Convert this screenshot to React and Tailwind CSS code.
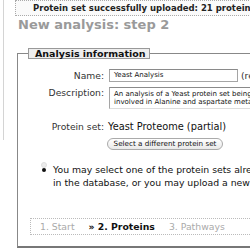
const AnalysisStep2 = () => {
  const steps = [
    { label: '1. Start', active: false },
    { label: '» 2. Proteins', active: true },
    { label: '3. Pathways', active: false },
  ];

  return (
    <div className="w-[250px] h-[250px] overflow-hidden bg-white flex font-['DejaVu_Sans',Verdana,sans-serif] text-[#333]">
      {/* sidebar edge */}
      <div className="w-[4px] h-[140px] border-r border-[#d4d4d4] shrink-0" />

      <div className="ml-[11px] w-[300px] shrink-0 flex flex-col">
        {/* Notice */}
        <div className="h-[16px] border border-dotted border-r-0 border-[#aaa] bg-[#fafafa] pl-[17px] flex items-center text-[8.5px] font-bold text-[#222] whitespace-nowrap">
          Protein set successfully uploaded: 21 proteins
        </div>

        <h1 className="ml-[3px] mt-[1px] text-[13px] leading-[16px] font-bold text-[#9a9a9a] whitespace-nowrap">
          New analysis: step 2
        </h1>

        <fieldset className="mt-[15px] ml-[2px] w-[290px] border border-b-2 border-[#888] border-b-[#777] px-0 pt-[10px] pb-[11px] text-[9.2px]">
          <legend className="ml-[10px] w-[122px] h-[11px] border border-[#999] bg-[#eee] pl-[6px] text-[9.5px] leading-[9px] font-bold text-[#111] whitespace-nowrap">
            Analysis information
          </legend>

          <div className="grid grid-cols-[86px_1fr] gap-x-[5px]">
            <div className="text-right leading-[13px]">Name:</div>
            <div className="flex items-center gap-[3px] whitespace-nowrap">
              <div className="w-[129px] h-[13px] border border-[#a5a5a5] border-t-[#8a8a8a] bg-white pl-[4px] text-[7px] leading-[11px] text-[#111]">
                Yeast Analysis
              </div>
              <span className="leading-[13px]">(required)</span>
            </div>

            <div className="mt-[5px] text-right leading-[12px]">Description:</div>
            <div className="mt-[5px] w-[190px] h-[22px] border border-[#a5a5a5] border-t-[#8a8a8a] border-b-[#ddd] bg-white pl-[4px] pt-[1.5px] text-[7px] leading-[8.5px] text-[#111] whitespace-nowrap">
              An analysis of a Yeast protein set being
              <br />
              involved in Alanine and aspartate metabolism
            </div>

            <div className="mt-[11px] text-right leading-[14px]">Protein set:</div>
            <div className="mt-[11px] -ml-[1px] leading-[14px] text-[9.8px] text-[#111] whitespace-nowrap">
              Yeast Proteome (partial)
            </div>
          </div>

          <div className="flex pl-[89px] mt-[4px]">
            <button className="w-[116px] h-[12px] rounded-full border border-[#aaa] bg-gradient-to-b from-white to-[#e9e9e9] text-[7.2px] leading-[10px] text-[#111] whitespace-nowrap">
              Select a different protein set
            </button>
          </div>

          {/* Hint */}
          <div className="mt-[12px] ml-[23px] flex">
            <div className="w-[12px] shrink-0 flex flex-col">
              <div className="w-[6px] h-[6px] rounded-full bg-[#ececec] border border-[#dedede]" />
              <div className="w-[4px] h-[4px] ml-[1px] rounded-full bg-[#111]" />
            </div>
            <div className="pt-[1px] text-[9.3px] leading-[13px] text-[#111] whitespace-nowrap">
              You may select one of the protein sets already
              <br />
              in the database, or you may upload a new one.
            </div>
          </div>

          {/* Steps */}
          <div className="mt-[29px] ml-[12px] h-[17px] border border-dotted border-r-0 border-[#bbb] pl-[9px] flex items-center gap-[14px] text-[9.3px] whitespace-nowrap">
            {steps.map(s => (
              <span key={s.label} className={s.active ? 'font-bold text-[#111]' : 'text-[#aaa]'}>
                {s.label}
              </span>
            ))}
          </div>
        </fieldset>
      </div>
    </div>
  );
};

export default AnalysisStep2;
